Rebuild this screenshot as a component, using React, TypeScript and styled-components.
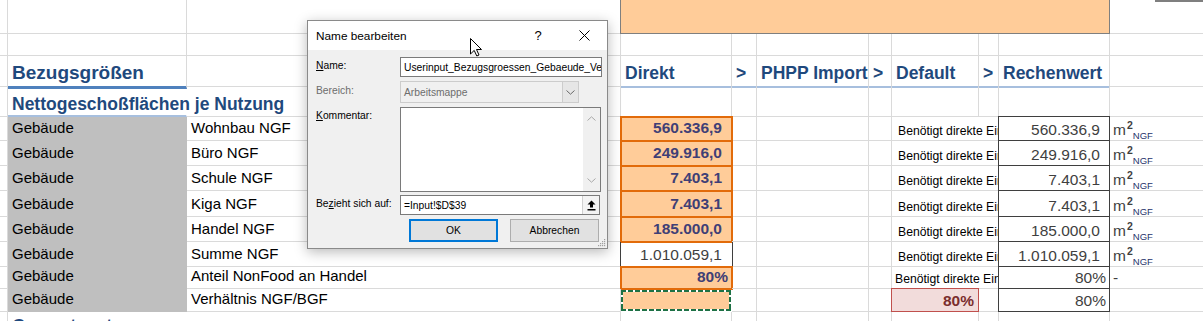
import React from "react";
import styled, { createGlobalStyle } from "styled-components";

const GRID = "#dadada";
const HEAD_BLUE = "#1f497d";

const GlobalStyle = createGlobalStyle`
  html, body {
    margin: 0;
    padding: 0;
    background: #fff;
  }
  body {
    overflow: hidden;
    font-family: "Liberation Sans", Arial, sans-serif;
  }
`;

const Page = styled.div`
  position: relative;
  width: 1203px;
  height: 321px;
  overflow: hidden;
  background: #fff;
`;

const Sheet = styled.div`
  display: grid;
  grid-template-columns: 8px 179px 434px 111px 25px 112px 23px 87px 20px 111px 140px;
  grid-template-rows: 34px 22px 31px 30px 24px 25px 25px 26px 25px 25px 22px 23px 25px;
  font-family: "Liberation Sans", Arial, sans-serif;
  font-size: 15px;
  color: #000;
`;

const Cell = styled.div<{ $span?: number }>`
  grid-column: span ${(p) => p.$span ?? 1};
  box-sizing: border-box;
  min-width: 0;
  display: flex;
  align-items: flex-end;
  padding: 0 3px 4px 4px;
  border-right: 1px solid ${GRID};
  border-bottom: 1px solid ${GRID};
  line-height: 17px;
  white-space: nowrap;
  overflow: hidden;
`;

const Banner = styled(Cell)`
  background: #ffcc99;
  border: 1px solid #7f7f7f;
  border-top: none;
  margin-left: -1px;
`;

const Heading = styled(Cell)`
  font-size: 19px;
  font-weight: 700;
  color: ${HEAD_BLUE};
  line-height: 22px;
  padding-bottom: 2px;
  border-bottom: 3px solid #4f81bd;
  margin-bottom: -2px;
`;

const ColumnHead = styled(Cell)`
  font-size: 17.5px;
  font-weight: 700;
  color: ${HEAD_BLUE};
  line-height: 20px;
  padding-bottom: 3px;
  border-bottom: 2px solid #a7bfde;
  margin-bottom: -1px;
`;

const SectionTitle = styled(Cell)`
  font-size: 17.5px;
  font-weight: 700;
  color: ${HEAD_BLUE};
  line-height: 20px;
  padding-bottom: 0;
  border-right-color: transparent;
  overflow: visible;
`;

const SubHeading = styled(SectionTitle)`
  padding-bottom: 1px;
  border-bottom: 2px solid #a7bfde;
`;

const Category = styled(Cell)`
  background: #bfbfbf;
  border-color: #bfbfbf;
`;

const InputCell = styled(Cell)<{ $pad: number; $bottom?: number }>`
  margin: -1px;
  border: 2px solid #e26b0a;
  background: #ffcc99;
  justify-content: flex-end;
  font-size: 15.5px;
  font-weight: 700;
  color: #3f3f76;
  padding: 0 ${(p) => p.$pad}px ${(p) => p.$bottom ?? 4}px 4px;
`;

const SumCell = styled(Cell)`
  margin: 0 -1px 0 -1px;
  border: 1px solid #3f3f3f;
  border-top: none;
  border-bottom: none;
  justify-content: flex-end;
  font-size: 15.5px;
  color: #3f3f3f;
  padding: 0 10px 4px 4px;
`;

const PendingCell = styled(Cell)`
  margin: 1px 1px 1px 0;
  border: none;
  background:
    repeating-linear-gradient(90deg, #1e7145 0 5px, #fff 5px 7px) top / 100% 2px no-repeat,
    repeating-linear-gradient(90deg, #1e7145 0 5px, #fff 5px 7px) bottom / 100% 2px no-repeat,
    repeating-linear-gradient(180deg, #1e7145 0 5px, #fff 5px 7px) left / 2px 100% no-repeat,
    repeating-linear-gradient(180deg, #1e7145 0 5px, #fff 5px 7px) right / 2px 100% no-repeat,
    #ffcc99;
`;

const Hint = styled(Cell)<{ $indent: number }>`
  font-size: 12.2px;
  line-height: 14px;
  padding: 0 0 2px ${(p) => p.$indent}px;
`;

const DefaultValue = styled(Cell)`
  margin: -1px 0 0 -1px;
  border: 1px solid #c0504d;
  background: #f2dcdb;
  justify-content: flex-end;
  font-size: 15.5px;
  font-weight: 700;
  color: #7b2e2e;
  padding: 0 4px 2px 4px;
`;

const OutputCell = styled(Cell)<{ $pad: number }>`
  margin: -1px 0 0 -1px;
  border: 1px solid #3f3f3f;
  background: #fff;
  justify-content: flex-end;
  font-size: 15.5px;
  color: #3f3f3f;
  padding: 0 ${(p) => p.$pad}px 2px 4px;
`;

const UnitCell = styled(Cell)`
  font-size: 15.5px;
  color: #3f3f3f;
  padding: 0 3px 2px 3px;
  overflow: visible;
`;

const UnitText = styled.span`
  display: inline-block;
  white-space: nowrap;
`;

const Sup = styled.span`
  font-size: 10.5px;
  font-weight: 700;
  vertical-align: 6px;
  line-height: 0;
  margin-left: 1px;
`;

const Sub = styled.span`
  font-size: 9.5px;
  color: #26336b;
  vertical-align: -4px;
  line-height: 0;
`;

const ShapeEdge = styled.div`
  position: absolute;
  left: 1155px;
  top: 0;
  width: 48px;
  height: 2px;
  background: #7f7f7f;
`;

/* ---------- dialog ---------- */

const Dialog = styled.div`
  position: absolute;
  left: 307px;
  top: 20px;
  width: 301px;
  height: 229px;
  box-sizing: border-box;
  border: 1px solid #8a8a8a;
  background: #f0f0f0;
  box-shadow: 0 3px 12px rgba(0, 0, 0, 0.28);
  display: flex;
  flex-direction: column;
  font-family: "Liberation Sans", Arial, sans-serif;
  font-size: 10.3px;
  color: #000;
`;

const TitleBar = styled.div`
  flex: none;
  height: 29px;
  background: #fff;
  display: flex;
  align-items: center;
  padding-left: 8px;
`;

const Title = styled.span`
  flex: 1;
  font-size: 11.8px;
`;

const TitleButton = styled.div`
  width: 46px;
  height: 29px;
  display: flex;
  align-items: center;
  justify-content: center;
  font-size: 13px;
`;

const Body = styled.div`
  flex: 1;
  position: relative;
  display: flex;
  flex-direction: column;
  padding: 7px 5px 0 8px;
`;

const FormRow = styled.div<{ $height: number; $gap: number }>`
  display: grid;
  grid-template-columns: 84px 201px;
  height: ${(p) => p.$height}px;
  margin-top: ${(p) => p.$gap}px;
`;

const FieldLabel = styled.div<{ $disabled?: boolean; $top?: number }>`
  padding-top: ${(p) => p.$top ?? 3}px;
  color: ${(p) => (p.$disabled ? "#6d6d6d" : "#000")};
  white-space: nowrap;
`;

const TextBox = styled.div<{ $width?: number }>`
  box-sizing: border-box;
  width: ${(p) => p.$width ?? 201}px;
  border: 1px solid #7a7a7a;
  background: #fff;
  display: flex;
  align-items: center;
  padding-left: 3px;
  overflow: hidden;
  white-space: nowrap;
`;

const SelectBox = styled.div`
  box-sizing: border-box;
  width: 179px;
  border: 1px solid #cccccc;
  background: #f0f0f0;
  color: #6d6d6d;
  display: flex;
  align-items: center;
  padding-left: 3px;
`;

const SelectText = styled.span`
  flex: 1;
`;

const SelectButton = styled.div`
  width: 16px;
  height: 100%;
  box-sizing: border-box;
  border-left: 1px solid #cccccc;
  background: #e6e6e6;
  display: flex;
  align-items: center;
  justify-content: center;
`;

const CommentBox = styled.div`
  box-sizing: border-box;
  width: 201px;
  border: 1px solid #7a7a7a;
  background: #fff;
  display: flex;
  justify-content: flex-end;
`;

const ScrollTrack = styled.div`
  width: 17px;
  background: #f0f0f0;
  display: flex;
  flex-direction: column;
  justify-content: space-between;
  align-items: center;
  padding: 8px 0 8px;
`;

const RefBox = styled(TextBox)`
  padding-right: 0;
  align-items: stretch;
`;

const RefText = styled.span`
  flex: 1;
  display: flex;
  align-items: center;
`;

const RefButton = styled.div`
  width: 17px;
  box-sizing: border-box;
  border-left: 1px solid #d0d0d0;
  background: #f3f3f3;
  display: flex;
  align-items: center;
  justify-content: center;
`;

const ButtonBar = styled.div`
  display: flex;
  justify-content: flex-end;
  gap: 12px;
  padding-right: 2px;
`;

const DialogButton = styled.div<{ $default?: boolean }>`
  box-sizing: border-box;
  width: 89px;
  height: 23px;
  background: #e1e1e1;
  border: 1px solid ${(p) => (p.$default ? "#0078d7" : "#adadad")};
  box-shadow: ${(p) => (p.$default ? "inset 0 0 0 1px #0078d7" : "none")};
  display: flex;
  align-items: center;
  justify-content: center;
`;

const Grip = styled.svg`
  position: absolute;
  right: 1px;
  bottom: 1px;
`;

const Cursor = styled.svg`
  position: absolute;
  left: 470px;
  top: 38px;
`;

type SheetRow = {
  item: string;
  direct?: string;
  sum?: string;
  pending?: boolean;
  fallback?: string;
  result: string;
  unit?: "area" | "dash";
  hintIndent?: number;
};

const rows: SheetRow[] = [
  { item: "Wohnbau NGF", direct: "560.336,9", result: "560.336,9", unit: "area" },
  { item: "Büro NGF", direct: "249.916,0", result: "249.916,0", unit: "area" },
  { item: "Schule NGF", direct: "7.403,1", result: "7.403,1", unit: "area" },
  { item: "Kiga NGF", direct: "7.403,1", result: "7.403,1", unit: "area" },
  { item: "Handel NGF", direct: "185.000,0", result: "185.000,0", unit: "area" },
  { item: "Summe NGF", sum: "1.010.059,1", result: "1.010.059,1", unit: "area" },
  { item: "Anteil NonFood an Handel", direct: "80%", result: "80%", unit: "dash", hintIndent: 3 },
  { item: "Verhältnis NGF/BGF", pending: true, fallback: "80%", result: "80%" },
];

const heads = ["Direkt", ">", "PHPP Import", ">", "Default", ">", "Rechenwert"];

const blanks = (n: number, key: string) =>
  Array.from({ length: n }, (_, i) => <Cell key={`${key}${i}`} />);

const padFor = (v: string) => (v.endsWith("%") ? 3 : 9);

const Chevron = ({ up, color }: { up?: boolean; color: string }) => (
  <svg width="9" height="5" viewBox="0 0 9 5">
    <polyline
      points={up ? "0.5,4.5 4.5,0.8 8.5,4.5" : "0.5,0.5 4.5,4.2 8.5,0.5"}
      fill="none"
      stroke={color}
      strokeWidth="1"
    />
  </svg>
);

const DataRow = ({ row }: { row: SheetRow }) => (
  <>
    <Cell />
    <Category>Gebäude</Category>
    <Cell>{row.item}</Cell>
    {row.direct && (
      <InputCell $pad={padFor(row.direct)} $bottom={row.direct.endsWith("%") ? 3 : 4}>
        {row.direct}
      </InputCell>
    )}
    {row.sum && <SumCell>{row.sum}</SumCell>}
    {row.pending && <PendingCell />}
    <Cell />
    <Cell />
    <Cell />
    {row.fallback ? (
      <>
        <DefaultValue>{row.fallback}</DefaultValue>
        <Cell />
      </>
    ) : (
      <Hint $span={2} $indent={row.hintIndent ?? 6}>
        Benötigt direkte Eingabe
      </Hint>
    )}
    <OutputCell $pad={padFor(row.result)}>{row.result}</OutputCell>
    <UnitCell>
      {row.unit === "area" && (
        <UnitText>
          m<Sup>2</Sup>
          <Sub>NGF</Sub>
        </UnitText>
      )}
      {row.unit === "dash" && "-"}
    </UnitCell>
  </>
);

const NameDialog = () => (
  <Dialog>
    <TitleBar>
      <Title>Name bearbeiten</Title>
      <TitleButton>?</TitleButton>
      <TitleButton>
        <svg width="11" height="11" viewBox="0 0 11 11">
          <path d="M0.5 0.5 L10.5 10.5 M10.5 0.5 L0.5 10.5" stroke="#000" strokeWidth="1" />
        </svg>
      </TitleButton>
    </TitleBar>
    <Body>
      <FormRow $height={20} $gap={0}>
        <FieldLabel>
          <u>N</u>ame:
        </FieldLabel>
        <TextBox $width={202}>Userinput_Bezugsgroessen_Gebaeude_VerhaeltnisNGFBGF</TextBox>
      </FormRow>
      <FormRow $height={22} $gap={4}>
        <FieldLabel $disabled $top={4}>
          Bereich:
        </FieldLabel>
        <SelectBox>
          <SelectText>Arbeitsmappe</SelectText>
          <SelectButton>
            <Chevron color="#6a6a6a" />
          </SelectButton>
        </SelectBox>
      </FormRow>
      <FormRow $height={85} $gap={4}>
        <FieldLabel>
          <u>K</u>ommentar:
        </FieldLabel>
        <CommentBox>
          <ScrollTrack>
            <Chevron up color="#a8a8a8" />
            <Chevron color="#a8a8a8" />
          </ScrollTrack>
        </CommentBox>
      </FormRow>
      <FormRow $height={20} $gap={3}>
        <FieldLabel>
          Be<u>z</u>ieht sich auf:
        </FieldLabel>
        <RefBox $width={200}>
          <RefText>=Input!$D$39</RefText>
          <RefButton>
            <svg width="9" height="11" viewBox="0 0 9 11">
              <path d="M4.5 0.5 L0.5 4.5 H3 V7.5 H6 V4.5 H8.5 Z" fill="#000" />
              <rect x="0.5" y="9" width="8" height="1.5" fill="#000" />
            </svg>
          </RefButton>
        </RefBox>
      </FormRow>
      <FormRow $height={23} $gap={4}>
        <div />
        <ButtonBar>
          <DialogButton $default>OK</DialogButton>
          <DialogButton>Abbrechen</DialogButton>
        </ButtonBar>
      </FormRow>
      <Grip width="8" height="8" viewBox="0 0 8 8">
        <g fill="#a0a0a0">
          <rect x="6" y="0" width="1.2" height="1.2" />
          <rect x="4" y="2" width="1.2" height="1.2" />
          <rect x="6" y="2" width="1.2" height="1.2" />
          <rect x="2" y="4" width="1.2" height="1.2" />
          <rect x="4" y="4" width="1.2" height="1.2" />
          <rect x="6" y="4" width="1.2" height="1.2" />
          <rect x="0" y="6" width="1.2" height="1.2" />
          <rect x="2" y="6" width="1.2" height="1.2" />
          <rect x="4" y="6" width="1.2" height="1.2" />
          <rect x="6" y="6" width="1.2" height="1.2" />
        </g>
      </Grip>
    </Body>
  </Dialog>
);

export default function App() {
  return (
    <Page>
      <GlobalStyle />
      <Sheet>
        {blanks(3, "r1")}
        <Banner $span={7} />
        <Cell />

        {blanks(11, "r2")}

        <Cell />
        <Heading>Bezugsgrößen</Heading>
        <Cell />
        {heads.map((h, i) => (
          <ColumnHead key={`h${i}`}>{h}</ColumnHead>
        ))}
        <Cell />

        <Cell />
        <SubHeading>Nettogeschoßflächen je Nutzung</SubHeading>
        {blanks(9, "r4")}

        {rows.map((r) => (
          <DataRow key={r.item} row={r} />
        ))}

        <Cell />
        <SectionTitle>Gesamtwerte</SectionTitle>
        {blanks(9, "r13")}
      </Sheet>
      <ShapeEdge />
      <NameDialog />
      <Cursor width="13" height="19" viewBox="0 0 13 19">
        <path
          d="M0.5 0.5 L0.5 16 L4.2 12.4 L6.8 18 L9 17 L6.5 11.5 L11.5 11.5 Z"
          fill="#fff"
          stroke="#000"
          strokeWidth="1"
          strokeLinejoin="round"
        />
      </Cursor>
    </Page>
  );
}
